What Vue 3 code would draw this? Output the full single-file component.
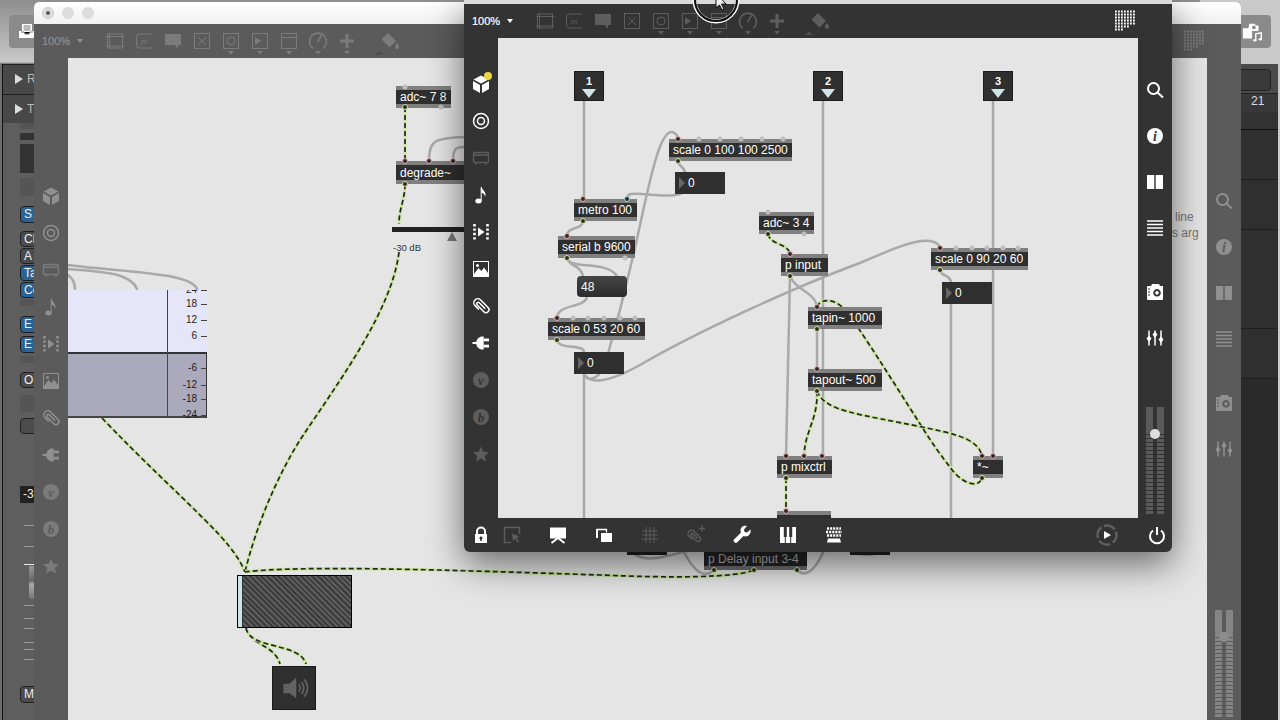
<script setup>
const s = 'fill="none" stroke="currentColor"'
const tri = '<path d="M9 22h6l-3 3.5z" fill="currentColor"/>'
const badge = (t) => `<circle cx="12" cy="12" r="8" fill="currentColor"/><text x="12" y="16.5" text-anchor="middle" font-family="Liberation Serif" font-style="italic" font-weight="700" font-size="13" fill="var(--bar)">${t}</text>`

const icons = {
  newobj: `<g ${s}><rect x="4.500" y="5" width="15" height="14"/><path d="M2.500 7.500h19M2.500 17h19M6.500 4v16"/></g>`,
  message: `<path ${s} d="M20 5H7.500Q4.500 5 4.500 8v8q0 3 3 3H20"/><text x="12" y="15" text-anchor="middle" font-family="Liberation Serif" font-style="italic" font-size="9" fill="currentColor">m</text>`,
  comment: `<path fill="currentColor" d="M4 5h16v11h-3v3.500L13.500 16H4z"/>`,
  toggle: `<g ${s}><rect x="4.500" y="4.500" width="15" height="15"/><path d="M8 8l8 8M16 8l-8 8"/></g>`,
  button: `<g ${s}><rect x="4.500" y="4.500" width="15" height="15"/><circle cx="12" cy="12" r="4"/></g>${tri}`,
  number: `<g ${s}><rect x="4.500" y="4.500" width="15" height="15"/></g><path fill="currentColor" d="M7 8l6 4-6 4z"/>${tri}`,
  slider: `<g ${s}><rect x="4.500" y="4.500" width="15" height="15"/><path d="M4.500 8.500h15"/></g>${tri}`,
  dial: `<g ${s} stroke-width="1.600"><path d="M7 19.500a8.500 8.500 0 1 1 10 0"/><path d="M11.500 13L15.500 6.500"/></g>${tri}`,
  plus: `<path fill="currentColor" d="M10.500 5h3v5.500H19v3h-5.500V19h-3v-5.500H5v-3h5.500z"/>${tri}`,
  paint: `<path fill="currentColor" d="M11 4l8 8-6.500 6.500L4.500 10.500z"/><path fill="currentColor" d="M20 14c1.500 2 2 3 2 4a2 2 0 0 1-4 0c0-1 .5-2 2-4z"/><path fill="#4d4d4d" d="M-2 26l4-4 4 4z"/>`,
  dots: `<path d="M2 2.500h21M2 5.500h21M2 8.500h21M2 11.500h21M2 14.500h21M2 17.500h15M2 20.500h9" stroke="currentColor" stroke-width="2" stroke-dasharray="1.800 1.200" fill="none"/>`,
  cube: `<path fill="currentColor" d="M12 3.500l7.500 4-7.500 4-7.500-4zM4 9l7 4v8l-7-4zM20 9l-7 4v8l7-4z"/>`,
  target: `<g ${s} stroke-width="1.500"><circle cx="12" cy="12" r="7.500"/><circle cx="12" cy="12" r="3.500"/></g>`,
  patcher: `<g ${s} stroke-width="1.300"><rect x="4.500" y="6.500" width="15" height="10" rx="1"/><path d="M4.500 9h15M7 16.500V19M17 16.500V19"/></g>`,
  note: `<ellipse cx="9.500" cy="18" rx="3.200" ry="2.500" fill="currentColor"/><path fill="currentColor" d="M11.700 18V4h1c.5 3.500 5 4.500 3.500 10-.5-2.500-2-4-3.500-4.300V18z"/>`,
  step: `<path d="M5.500 4v16M18.500 4v16" stroke="currentColor" stroke-width="2.600" stroke-dasharray="2.400 2" fill="none"/><path fill="currentColor" d="M9 7.500l6.500 4.500L9 16.500z"/>`,
  image: `<rect x="4.500" y="4.500" width="15" height="15" ${s}/><path fill="currentColor" d="M5 19v-2l4.500-6 3 3 2.500-3.500 4 5.500v3z"/><circle cx="8.500" cy="8.500" r="1.500" fill="currentColor"/>`,
  clip: `<path ${s} stroke-width="1.500" transform="rotate(-45 12 12)" d="M8 13V7.500a4 4 0 0 1 8 0V18a3 3 0 0 1-6 0V8.500a1.500 1.500 0 0 1 3 0V17"/>`,
  plug: `<path fill="currentColor" d="M3.500 11h3.700c.6-3 3-5.500 6-5.500h1.500v13h-1.500c-3 0-5.400-2.500-6-5.500H3.500z"/><rect x="14.500" y="7.500" width="5.500" height="2.800" fill="currentColor"/><rect x="14.500" y="13.700" width="5.500" height="2.800" fill="currentColor"/>`,
  v: badge('v'),
  b: badge('b'),
  star: `<path fill="currentColor" d="M12 4.500l2.300 5.200 5.700.5-4.300 3.700 1.300 5.600-5-3-5 3 1.300-5.600L4 10.200l5.700-.5z"/>`,
  search: `<g ${s} stroke-width="2"><circle cx="10.500" cy="10.500" r="5.500"/><path d="M14.500 14.500l5.500 5"/></g>`,
  info: `<circle cx="12" cy="12" r="8" fill="currentColor"/><text x="12" y="17" text-anchor="middle" font-family="Liberation Serif" font-style="italic" font-weight="700" font-size="14" fill="var(--bar)">i</text>`,
  split: `<path fill="currentColor" d="M4 5h7.300v14H4zM12.700 5H20v14h-7.300z"/>`,
  list: `<path fill="none" stroke="currentColor" stroke-width="1.500" d="M4 5h16M4 8.500h16M4 12h16M4 15.500h16M4 19h16"/>`,
  camera: `<path fill="currentColor" fill-rule="evenodd" d="M9 4h7l1 2h3v13a1 1 0 0 1-1 1H5a1 1 0 0 1-1-1V7a1 1 0 0 1 1-1h3zM14 9a3.800 3.800 0 1 0 .01 0zM14 11a1.800 1.800 0 1 1-.01 0z"/><path d="M5 9h2M5 12h2M5 15h2" stroke="var(--bar)" stroke-width="1.200"/>`,
  mixer: `<path ${s} stroke-width="1.500" d="M6 4.500v15M12 4.500v15M18 4.500v15"/><path fill="currentColor" d="M6 9.500l2.500 3L6 16l-2.500-3.500zM12 5.500l2.500 3-2.500 3.500-2.500-3.500zM18 10.500l2.500 3-2.500 3.500-2.500-3.500z"/>`,
  lock: `<path ${s} stroke-width="2" d="M8 11V8.500a4 4 0 0 1 8 0V11"/><path fill="currentColor" fill-rule="evenodd" d="M6 11h12v9H6zM12 13.500a1.500 1.500 0 0 0-.8 2.800V18h1.600v-1.700a1.500 1.500 0 0 0-.8-2.800z"/>`,
  select: `<path ${s} stroke-width="1.500" d="M11 19.500H4.500v-15h15V11"/><path fill="currentColor" d="M12 10.500l7.500 3-3 1 2.500 4-1.500 1-2.500-4-2 2.500z"/>`,
  present: `<path fill="currentColor" d="M4 4.500h16v11H4z"/><path ${s} stroke-width="2" d="M12 15l-6.500 5M12 15l6.500 5"/>`,
  windows: `<path fill="none" stroke="currentColor" stroke-width="1.300" d="M4.500 6.500h10v3"/><path fill="currentColor" d="M4 6h2v9H4z"/><path fill="currentColor" d="M9 10h11v9H9z"/>`,
  grid: `<path ${s} d="M8 4v16M12 4v16M16 4v16M4 8h16M4 12h16M4 16h16"/>`,
  clipadd: `<path ${s} stroke-width="1.400" transform="translate(-1 2) rotate(-45 11 12)" d="M8 13V8a3.500 3.500 0 0 1 7 0v9a2.600 2.600 0 0 1-5 0V9a1.300 1.300 0 0 1 2.600 0v7"/><path ${s} stroke-width="1.300" d="M18 2.500v6M15 5.500h6"/>`,
  wrench: `<path fill="currentColor" d="M20.500 6.500l-3.500 3-2.500-.5-.5-2.500 3-3.500c-3-1-6.500 1-6.500 4.500 0 .8.200 1.500.5 2L4 16.500c-1.500 1.500 1.500 4.500 3 3l6.500-6.500c.5.300 1.300.5 2 .5 3.500 0 5.800-3.500 5-7z"/>`,
  piano: `<path fill="currentColor" d="M4 4h16v16H4z"/><path d="M9.300 20v-6M14.700 20v-6" stroke="var(--bar)" stroke-width="1"/><path fill="var(--bar)" d="M7.800 4h3v10h-3zM13.200 4h3v10h-3z"/>`,
  keys: `<path stroke="currentColor" stroke-width="2.400" stroke-dasharray="2.100 1" fill="none" d="M5 5.500h14M4 9h16M5 12.500h14"/><path fill="currentColor" d="M6 15.500h12l1 4H5z"/>`,
  play: `<circle cx="12" cy="12" r="9.500" fill="none" stroke="#5f5f5f" stroke-width="2.500" stroke-dasharray="12 2.900" transform="rotate(-20 12 12)"/><path fill="currentColor" d="M9 8l7 4-7 4z"/>`,
  power: `<path ${s} stroke-width="2" d="M8 7.500a7 7 0 1 0 8 0M12 4v8"/>`,
  speaker: `<path fill="currentColor" d="M1 9h7l8-7v24l-8-6H1z"/><path fill="none" stroke="currentColor" stroke-width="2" d="M19 10a6 6 0 0 1 0 8M22 7a10 10 0 0 1 0 14M25 4a14 14 0 0 1 0 20"/>`
}

const on = (n) => ({ n })
const off = (n) => ({ n, off: true })
const topBar = ['newobj', 'message', 'comment', 'toggle', 'button', 'number', 'slider', 'dial', 'plus'].map(off)
const leftBar = [on('cube'), on('target'), off('patcher'), on('note'), on('step'), on('image'), on('clip'), on('plug'), off('v'), off('b'), off('star')]
const rightA = ['search', 'info', 'split', 'list'].map(on)
const bottomBar = [on('lock'), off('select'), on('present'), on('windows'), off('grid'), off('clipadd'), on('wrench'), on('piano'), on('keys')]

const box = (x, y, w, t, h = 22) => ({ kind: 'box', x, y, w, h, t })
const num = (x, y) => ({ kind: 'num', x, y, w: 50, h: 22, t: '0' })
const inlet = (x, y, t) => ({ kind: 'inlet', x, y, w: 30, h: 30, t })

const frontBoxes = [
  inlet(574, 71, '1'), inlet(813, 71, '2'), inlet(983, 71, '3'),
  box(669, 139, 123, 'scale 0 100 100 2500'), num(675, 172),
  box(574, 199, 63, 'metro 100'), box(558, 236, 77, 'serial b 9600'),
  { kind: 'msg', x: 577, y: 276, w: 50, h: 21, t: '48' },
  box(548, 318, 97, 'scale 0 53 20 60'), num(574, 352),
  box(759, 212, 55, 'adc~ 3 4'), box(781, 254, 47, 'p input'),
  box(808, 307, 74, 'tapin~ 1000'), box(808, 369, 74, 'tapout~ 500'),
  box(777, 456, 55, 'p mixctrl'), box(973, 456, 30, '*~'),
  box(931, 248, 97, 'scale 0 90 20 60'), num(942, 282),
  box(777, 511, 54, '')
]

const backBoxes = [
  box(396, 86, 55, 'adc~ 7 8'), box(396, 161, 80, 'degrade~', 23),
  { kind: 'delay', x: 704, y: 548, w: 103, h: 22, t: 'p Delay input 3-4' },
  { kind: 'plain', x: 627, y: 540, w: 40, h: 15, t: '' },
  { kind: 'plain', x: 850, y: 540, w: 40, h: 15, t: '' },
  { kind: 'note', x: 1175, y: 210, w: 30, h: 14, t: 'line' },
  { kind: 'note', x: 1172, y: 226, w: 30, h: 14, t: 's arg' }
]

const frontWires = [
  ['g', 'M584 101V199'],
  ['g', 'M678 161C678 167 685 166 685 173'],
  ['g', 'M685 188C685 199 660 195 642 194C630 193 627 194 627 199'],
  ['g', 'M584 374C588 382 596 380 604 368C612 340 624 300 640 225C650 180 660 130 672 132C676 133 678 136 678 140'],
  ['g', 'M584 374C590 385 610 382 640 365C700 330 800 285 860 263C890 250 915 239 930 241C936 242 940 245 940 249'],
  ['g', 'M584 374V518'],
  ['g', 'M583 221C583 230 567 226 567 236'],
  ['g', 'M567 258C570 268 580 264 583 276'],
  ['g', 'M567 258C570 270 606 260 617 276'],
  ['g', 'M587 297C585 308 557 304 557 318'],
  ['g', 'M557 340C559 350 584 344 584 352'],
  ['g', 'M823 101V456'],
  ['g', 'M993 101V456'],
  ['g', 'M951 304V518'],
  ['g', 'M940 270C941 277 950 274 951 282'],
  ['g', 'M790 276L786 456'],
  ['g', 'M791 278C796 290 815 292 817 307'],
  ['g', 'M817 329V369'],
  ['s', 'M768 234C770 245 788 243 790 254'],
  ['s', 'M817 307C820 298 835 298 845 310C860 328 895 385 922 427C932 443 942 457 950 467C960 482 978 490 982 478'],
  ['s', 'M817 391C818 420 805 430 804 456'],
  ['s', 'M817 391C825 412 860 414 922 427C950 433 980 438 982 457'],
  ['s', 'M786 478V511']
]

const backWires = [
  ['s', 'M405 107V161'],
  ['s', 'M405 184C405 200 399 208 399 224'],
  ['s', 'M399 252C392 310 340 380 300 440C275 480 255 530 245 572'],
  ['s', 'M102 418C140 458 175 490 205 520C225 540 238 555 245 572'],
  ['s', 'M245 572C300 565 450 570 600 575C670 578 735 578 754 570'],
  ['s', 'M246 628C250 645 275 645 280 664'],
  ['s', 'M246 628C250 650 300 642 306 664'],
  ['g', 'M429 161C429 140 435 138 465 137'],
  ['g', 'M453 161C453 148 456 147 465 147'],
  ['g', 'M68 265C120 272 190 272 197 289'],
  ['g', 'M68 269C100 272 130 272 137 289'],
  ['g', 'M68 275C72 278 75 282 75 289'],
  ['g', 'M632 552C645 565 670 555 690 550'],
  ['g', 'M682 548C695 575 705 578 714 570'],
  ['g', 'M797 570C805 578 815 572 825 548'],
  ['g', 'M848 550C858 556 870 556 885 552']
]

const port = (x, y, type) => ({ x, y, type })
const idle = (xs, y) => xs.map((x) => port(x, y, 'idle'))
const frontPorts = [
  port(678, 139, 'in'), ...idle([699, 720, 741, 762, 783], 139), port(678, 161, 'out'),
  port(583, 199, 'in'), port(627, 199, 'cold'), port(583, 221, 'out'),
  port(567, 236, 'in'), port(567, 258, 'out'), ...idle([625], 258),
  port(557, 318, 'in'), ...idle([573, 588, 604, 620, 635], 318), port(557, 340, 'out'),
  ...idle([768], 212), port(768, 234, 'out'), ...idle([804], 234),
  port(790, 254, 'in'), port(790, 276, 'out'),
  port(817, 307, 'in'), port(817, 329, 'out'), port(817, 369, 'in'), port(817, 391, 'out'),
  port(786, 456, 'in'), port(804, 456, 'in'), port(822, 456, 'in'), port(786, 478, 'out'),
  port(982, 456, 'in'), port(993, 456, 'in'), port(982, 478, 'out'),
  port(940, 248, 'in'), ...idle([956, 972, 987, 1003, 1018], 248), port(940, 270, 'out'),
  port(786, 511, 'in')
]
const backPorts = [
  ...idle([405], 87), port(405, 107, 'out'), ...idle([441], 107),
  port(405, 161, 'in'), port(429, 161, 'in'), port(453, 161, 'in'), port(405, 184, 'out'),
  port(714, 570, 'out'), port(754, 570, 'out'), port(797, 570, 'out')
]

const windows = [
  { id: 'back', ox: 68, oy: 58, view: '68 58 1139 662', boxes: backBoxes, wires: backWires, ports: backPorts },
  { id: 'front', ox: 498, oy: 38, view: '498 38 640 480', boxes: frontBoxes, wires: frontWires, ports: frontPorts }
]

const place = (b, win) => ({
  left: b.x - win.ox + 'px',
  top: b.y - win.oy + 'px',
  width: b.w + 'px',
  height: b.h + 'px'
})

const scaleLabels = [['24', 0], ['18', 14], ['12', 30], ['6', 46], ['-6', 78], ['-12', 95], ['-18', 109], ['-24', 125]]

// Live device strip behind the windows on the left
const stripRows = [
  { y: 123, h: 6, c: 'mid' }, { y: 133, h: 7, c: 'dark' }, { y: 144, h: 29, c: 'dark' },
  { y: 178, h: 18, c: 'mid' }, { y: 206, h: 17, c: 'blue', t: 'S' }, { y: 231, h: 16, c: 'outline', t: 'Cl' },
  { y: 248, h: 16, c: 'outline', t: 'A' }, { y: 265, h: 16, c: 'blue', t: 'Ta' }, { y: 282, h: 16, c: 'blue', t: 'Co' },
  { y: 299, h: 7, c: 'mid' }, { y: 316, h: 17, c: 'blue', t: 'E' }, { y: 336, h: 17, c: 'blue', t: 'E' },
  { y: 356, h: 7, c: 'mid' }, { y: 372, h: 16, c: 'outline', t: 'O' }, { y: 395, h: 17, c: 'mid' },
  { y: 418, h: 16, c: 'outline' }, { y: 486, h: 17, c: 'black', t: '-3' }, { y: 525, h: 1, c: 'tick' },
  { y: 546, h: 1, c: 'tick' }, { y: 564, h: 1, c: 'tick white' }, { y: 566, h: 33, c: 'fader' },
  { y: 605, h: 1, c: 'tick' }, { y: 618, h: 1, c: 'tick' }, { y: 628, h: 1, c: 'tick' },
  { y: 642, h: 1, c: 'tick' }, { y: 649, h: 1, c: 'tick' }, { y: 659, h: 1, c: 'tick' },
  { y: 686, h: 17, c: 'outline', t: 'M' }
]
const rows = stripRows.map((r, i) => ({
  ...r,
  gap: r.y - (i ? stripRows[i - 1].y + stripRows[i - 1].h : 123)
}))
</script>

<template>
  <div class="desktop">
    <div class="live-left">
      <div class="live-btn">
        <svg class="inbox" viewBox="0 0 16 16"><path fill="#fff" d="M3 1h10v7h3v7H0V8h3z"/><path stroke="#777" d="M4.500 3h7M4.500 5h7M4.500 7h7M2 9h3l1 2h4l1-2h3"/></svg>
      </div>
      <div class="live-panel">
        <div class="live-head"><i class="arrow"></i>R</div>
        <div class="live-head"><i class="arrow"></i>T</div>
        <div
          v-for="r in rows"
          :key="r.y"
          class="strip-row"
          :class="r.c"
          :style="{ height: r.h + 'px', marginTop: r.gap + 'px' }"
        >{{ r.t }}</div>
      </div>
    </div>

    <div class="live-right">
      <div class="live-btn right">
        <svg class="media" viewBox="0 0 24 24">
          <path fill="#fff" d="M8 3h6l1 2h3v6h-7v8H1V8h6z"/>
          <circle cx="13" cy="7" r="2" fill="#888"/>
          <path fill="none" stroke="#fff" stroke-width="1.500" d="M15 21v-7l6-1v7"/>
          <ellipse cx="14" cy="21" rx="1.800" ry="1.400" fill="#fff"/>
          <ellipse cx="20" cy="20" rx="1.800" ry="1.400" fill="#fff"/>
        </svg>
      </div>
      <div class="arrange">
        <div class="arr-head"><span class="arr-knob"></span></div>
        <div class="arr-bar">21</div>
        <div class="arr-ruler"></div>
        <div class="arr-track"></div>
        <div class="arr-track"></div>
        <div class="arr-track tall"></div>
        <div class="arr-track"></div>
      </div>
    </div>

    <div v-for="win in windows" :key="win.id" class="win" :class="'win-' + win.id">
      <div class="title">
        <template v-if="win.id === 'back'">
          <span class="light first"></span><span class="light"></span><span class="light"></span>
        </template>
      </div>

      <div class="toolbar">
        <span class="zoom">100%<i class="caret"></i></span>
        <svg v-for="ic in topBar" :key="ic.n" class="ic slot off" viewBox="0 0 24 24" v-html="icons[ic.n]"></svg>
        <svg class="ic off paint" viewBox="0 0 24 24" v-html="icons.paint"></svg>
        <svg class="ic dots" viewBox="0 0 24 24" v-html="icons.dots"></svg>
      </div>

      <div class="body">
        <div class="side side-left">
          <div v-for="ic in leftBar" :key="ic.n" class="ic-wrap">
            <svg class="ic" :class="{ off: ic.off }" viewBox="0 0 24 24" v-html="icons[ic.n]"></svg>
            <span v-if="ic.n === 'cube'" class="yellow"></span>
          </div>
        </div>

        <div class="canvas">
          <svg class="wires" :viewBox="win.view">
            <template v-for="(w, i) in win.wires" :key="i">
              <path v-if="w[0] === 'g'" class="wire" :d="w[1]" />
              <template v-else>
                <path class="sig-under" :d="w[1]" />
                <path class="sig-dash" :d="w[1]" />
              </template>
            </template>
          </svg>

          <template v-if="win.id === 'back'">
            <div class="slider-bar"><span class="slider-thumb"></span></div>
            <div class="slider-label">-30 dB</div>
            <div class="levels">
              <div class="levels-up"></div>
              <div class="levels-down"></div>
              <span class="vline"></span>
              <span v-for="l in scaleLabels" :key="l[0]" class="lv" :style="{ top: l[1] - 7 + 'px' }">{{ l[0] }}<i></i></span>
            </div>
            <div class="gain"><span class="gain-strip"></span><span class="gain-fill"></span></div>
            <div class="dac"><svg class="dac-ic" viewBox="0 0 28 28" v-html="icons.speaker"></svg></div>
          </template>

          <div
            v-for="b in win.boxes"
            :key="b.x + '-' + b.y"
            class="obj"
            :class="b.kind"
            :style="place(b, win)"
          >
            <i v-if="b.kind === 'num'" class="num-arrow"></i>
            <span>{{ b.t }}</span>
            <i v-if="b.kind === 'inlet'" class="inlet-arrow"></i>
          </div>

          <svg class="wires" :viewBox="win.view">
            <circle
              v-for="p in win.ports"
              :key="p.x + '_' + p.y"
              class="port"
              :class="p.type"
              :cx="p.x"
              :cy="p.y"
              r="2.500"
            />
          </svg>
        </div>

        <div class="side side-right">
          <svg v-for="ic in rightA" :key="ic.n" class="ic" viewBox="0 0 24 24" v-html="icons[ic.n]"></svg>
          <svg class="ic cam" viewBox="0 0 24 24" v-html="icons.camera"></svg>
          <svg class="ic" viewBox="0 0 24 24" v-html="icons.mixer"></svg>
          <div class="meter">
            <span class="m-col"></span><span class="m-col"></span>
            <span class="m-knob"></span>
          </div>
        </div>
      </div>

      <div v-if="win.id === 'front'" class="bottom">
        <svg
          v-for="ic in bottomBar"
          :key="ic.n"
          class="ic"
          :class="[{ off: ic.off }, 'b-' + ic.n]"
          viewBox="0 0 24 24"
          v-html="icons[ic.n]"
        ></svg>
        <svg class="ic play" viewBox="0 0 24 24" v-html="icons.play"></svg>
        <svg class="ic" viewBox="0 0 24 24" v-html="icons.power"></svg>
      </div>
    </div>

    <svg class="cursor" viewBox="0 0 60 30">
      <circle cx="30" cy="5" r="21.500" fill="none" stroke="#fff" stroke-width="4" />
      <circle cx="30" cy="5" r="21" fill="none" stroke="#111" stroke-width="2.200" />
      <path d="M30 -2v15l3.500-3 2.500 5 2-1-2.500-5h4.500z" fill="#eee" stroke="#111" />
    </svg>
  </div>
</template>

<style>
html, body { margin: 0; background: #777; }
</style>

<style scoped>
.desktop {
  position: relative;
  width: 1280px;
  height: 720px;
  overflow: hidden;
  font-family: "Liberation Sans", Arial, sans-serif;
  background: linear-gradient(180deg, #8e8e8e 0, #c9c9c9 62px, #6e6e6e 64px);
}

/* behind the windows */
.live-left { position: absolute; left: 0; top: 0; width: 60px; height: 720px; }
.live-btn {
  box-sizing: border-box;
  position: absolute;
  left: 9px;
  top: 15px;
  width: 40px;
  height: 33px;
  background: #8a8a8a;
  border-radius: 4px;
}
.inbox { position: absolute; left: 10px; top: 8px; width: 16px; height: 16px; }
.live-panel {
  position: absolute;
  left: 2px;
  top: 64px;
  width: 58px;
  height: 656px;
  box-sizing: border-box;
  border-left: 1px solid #111;
  background: #5e5e5e;
  color: #eee;
  font-size: 12px;
}
.live-head {
  box-sizing: border-box;
  display: flex;
  align-items: center;
  gap: 4px;
  height: 29.500px;
  padding-left: 12px;
  background: #484848;
  border-top: 1px solid #222;
  font-size: 12px;
  color: #bbb;
}
.arrow {
  width: 0;
  height: 0;
  border-left: 8px solid #ddd;
  border-top: 5px solid transparent;
  border-bottom: 5px solid transparent;
}
.strip-row {
  box-sizing: border-box;
  margin-left: 17px;
  padding-left: 3px;
  line-height: 16px;
  border-radius: 4px;
}
.strip-row.mid { background: #555; border-radius: 2px; }
.strip-row.dark { background: #333; border-radius: 0; }
.strip-row.blue { background: #2a6496; border: 1px solid #1c1c1c; line-height: 14px; }
.strip-row.outline { background: #4b4b4b; border: 1px solid #222; line-height: 14px; }
.strip-row.black { background: #222; border-radius: 0; }
.strip-row.tick { background: #9a9a9a; border-radius: 0; margin-left: 21px; }
.strip-row.tick.white { background: #eee; }
.strip-row.fader { background: linear-gradient(180deg, #999, #666 45%, #aaa 55%, #777); margin-left: 26px; border-radius: 0 0 0 3px; }

.live-right { position: absolute; left: 1200px; top: 0; width: 80px; height: 720px; background: #c9c9c9; }
.live-btn.right { left: 0; width: 71px; background: #8a8a8a; }
.media { position: absolute; left: 42px; top: 6px; width: 22px; height: 22px; }
.arrange {
  position: absolute;
  left: 0;
  top: 64px;
  width: 78px;
  height: 656px;
  background: #2a2a2a;
  color: #ddd;
  font-size: 12px;
}
.arr-head { position: relative; height: 29px; background: #4a4a4a; border-bottom: 1px solid #222; }
.arr-knob { position: absolute; left: 30px; top: 5px; width: 39px; height: 20px; background: #3a3a3a; border: 1px solid #222; border-radius: 4px; }
.arr-bar { height: 18px; padding-left: 51px; background: #383838; line-height: 15px; }
.arr-ruler { height: 17px; background: #333; border-bottom: 1px solid #111; }
.arr-track { height: 49px; background: #2f2f2f; border-bottom: 1px solid #1f1f1f; }
.arr-track.tall { height: 98px; }

/* windows */
.win { position: absolute; display: flex; flex-direction: column; --bar: #333; color: #fff; }
.win-back {
  --bar: #5b5b5b;
  left: 34px;
  top: 2px;
  width: 1207px;
  height: 718px;
  color: #909090;
  background: #5b5b5b;
  border-radius: 5px 5px 0 0;
}
.win-front {
  left: 464px;
  top: 0;
  width: 708px;
  height: 552px;
  background: #333;
  border-radius: 0 0 6px 6px;
  box-shadow: 0 12px 36px rgba(0, 0, 0, 0.55);
}
.title { flex: none; display: flex; align-items: center; gap: 8px; }
.win-back .title { height: 22px; padding-left: 8px; background: linear-gradient(180deg, #fff, #f1f1f1); border-radius: 5px 5px 0 0; }
.win-front .title { height: 4px; background: #d9d9d9; }
.light { width: 12px; height: 12px; border-radius: 50%; background: #dcdcdc; box-sizing: border-box; }
.light.first { position: relative; border: 1px solid #ccc; }
.light.first::after { content: ""; position: absolute; left: 3px; top: 3px; width: 4px; height: 4px; border-radius: 50%; background: #555; }

.toolbar { flex: none; display: flex; align-items: center; height: 34px; padding: 0 35px 0 8px; }
.zoom { display: flex; align-items: center; width: 61px; font-size: 11px; flex: none; -webkit-text-stroke: 0.2px currentColor; }
.caret { margin-left: 7px; border-top: 4px solid currentColor; border-left: 3px solid transparent; border-right: 3px solid transparent; }

.ic { flex: none; width: 24px; height: 24px; overflow: visible; color: inherit; }
.ic.off { color: #5d5d5d; }
.win-back .ic.off { color: #7b7b7b; }
.slot { margin-right: 5px; }
.paint { margin-left: 13px; }
.dots { margin-left: auto; }
.win-back .dots { color: #7f7f7f; }
.win-front .dots { color: #fff; }

.body { flex: 1; display: flex; min-height: 0; }
.side { flex: none; width: 34px; box-sizing: border-box; display: flex; flex-direction: column; align-items: center; }
.side-left { gap: 13px; }
.win-front .side-left { padding-top: 34px; }
.win-back .side-left { padding-top: 126px; }
.side-right { gap: 22px; }
.win-front .side-right { padding-top: 40px; }
.win-back .side-right { padding-top: 131px; }
.cam { margin-top: 18px; }
.ic-wrap { position: relative; width: 24px; height: 24px; }
.yellow { position: absolute; left: 15px; top: 0; width: 8px; height: 8px; border-radius: 50%; background: #ecd644; }
.win-back .yellow { display: none; }

.canvas { position: relative; flex: 1; overflow: hidden; background: #e5e5e5; }
.wires { position: absolute; left: 0; top: 0; width: 100%; height: 100%; }
.wire { fill: none; stroke: #a9a9a9; stroke-width: 2.500; stroke-linecap: round; }
.sig-under { fill: none; stroke: #c9e69c; stroke-width: 3.200; }
.sig-dash { fill: none; stroke: #262626; stroke-width: 1.700; stroke-dasharray: 5 3; }

.obj { position: absolute; box-sizing: border-box; color: #fff; font-size: 12px; white-space: nowrap; }
.box {
  display: flex;
  align-items: center;
  padding-left: 4px;
  background: #2f2f2f;
  border-top: 4px solid #808080;
  border-bottom: 4px solid #808080;
}
.num { display: flex; align-items: center; gap: 3px; padding-left: 4px; background: #2f2f2f; }
.num-arrow { border-left: 6px solid #666; border-top: 6px solid transparent; border-bottom: 6px solid transparent; }
.inlet {
  display: flex;
  flex-direction: column;
  align-items: center;
  padding-top: 3px;
  background: #2f2f2f;
  border: 1px solid #1c1c1c;
  font-size: 11px;
  font-weight: 700;
  line-height: 13px;
}
.inlet-arrow { margin-top: 1px; border-top: 9px solid #cfe6e8; border-left: 7px solid transparent; border-right: 7px solid transparent; }
.msg { display: flex; align-items: center; padding-left: 4px; background: linear-gradient(180deg, #454545, #2c2c2c); border-radius: 4px; }
.delay {
  display: flex;
  align-items: center;
  padding: 4px 0 0 4px;
  background: #242424;
  border-bottom: 4px solid #6c6c6c;
  color: #b8b8b8;
}
.plain { background: #222; }
.note { color: #777; font-size: 12px; }

.port { stroke-width: 1; fill: #33282a; }
.port.in { stroke: #e0b0b0; }
.port.cold { stroke: #9fdadd; }
.port.out { stroke: #d2e4a0; fill: #2c3024; }
.port.idle { fill: #bdbdbd; stroke: none; }

.meter { position: relative; display: flex; gap: 4px; margin-top: auto; margin-bottom: 3px; height: 108px; }
.win-back .meter { margin-bottom: 2px; }
.m-col {
  width: 7px;
  background:
    linear-gradient(180deg, #5a5a5a 24px, transparent 24px),
    repeating-linear-gradient(180deg, #5a5a5a 0 3px, #333 3px 4px);
}
.win-back .m-col {
  background:
    linear-gradient(180deg, #858585 24px, transparent 24px),
    repeating-linear-gradient(180deg, #858585 0 3px, #5b5b5b 3px 4px);
}
.m-knob { position: absolute; left: 4px; top: 22px; width: 10px; height: 10px; border-radius: 50%; background: #ddd; }
.win-back .m-knob { background: #8c8c8c; }

.bottom { flex: none; display: flex; align-items: center; gap: 22px; height: 34px; padding: 0 3px 0 5px; }
.b-lock { margin-right: -15px; }
.play { margin-left: auto; margin-right: 4px; }

/* fixed objects of the back patch */
.slider-bar { position: absolute; left: 324px; top: 169px; width: 100px; height: 5px; background: #222; }
.slider-thumb {
  position: absolute;
  left: 55px;
  top: 5px;
  border-bottom: 9px solid #777;
  border-left: 5px solid transparent;
  border-right: 5px solid transparent;
}
.slider-label { position: absolute; left: 325px; top: 184px; font-size: 9.500px; color: #333; }
.levels { position: absolute; left: 0; top: 232px; width: 139px; height: 128px; overflow: hidden; font-size: 10px; color: #222; }
.levels-up { height: 62px; width: 139px; background: #e6e6fb; }
.levels-down {
  box-sizing: border-box;
  height: 66px;
  width: 139px;
  background: #aba9bc;
  border-top: 2px solid #333;
  border-right: 1px solid #333;
  border-bottom: 2px solid #444;
}
.vline { position: absolute; left: 99px; top: 0; width: 1px; height: 128px; background: #444; }
.lv { position: absolute; right: 10px; line-height: 14px; }
.lv i { position: absolute; left: 100%; top: 7px; margin-left: 4px; width: 6px; height: 1px; background: #444; }
.gain {
  position: absolute;
  left: 169px;
  top: 517px;
  box-sizing: border-box;
  width: 115px;
  height: 53px;
  display: flex;
  border: 1px solid #000;
  background: #fff;
}
.gain-strip { width: 4px; background: #cfe4ea; border-right: 1px solid #333; }
.gain-fill { flex: 1; background: repeating-linear-gradient(45deg, #3c3c3c 0 2px, #5c5c5c 2px 4px); }
.dac {
  position: absolute;
  left: 204px;
  top: 608px;
  box-sizing: border-box;
  width: 44px;
  height: 44px;
  display: flex;
  align-items: center;
  justify-content: center;
  background: #2f2f2f;
  border: 1px solid #1a1a1a;
}
.dac-ic { width: 27px; height: 24px; color: #626262; overflow: visible; }

.cursor { position: absolute; left: 686px; top: -5px; width: 60px; height: 30px; overflow: hidden; }
</style>
